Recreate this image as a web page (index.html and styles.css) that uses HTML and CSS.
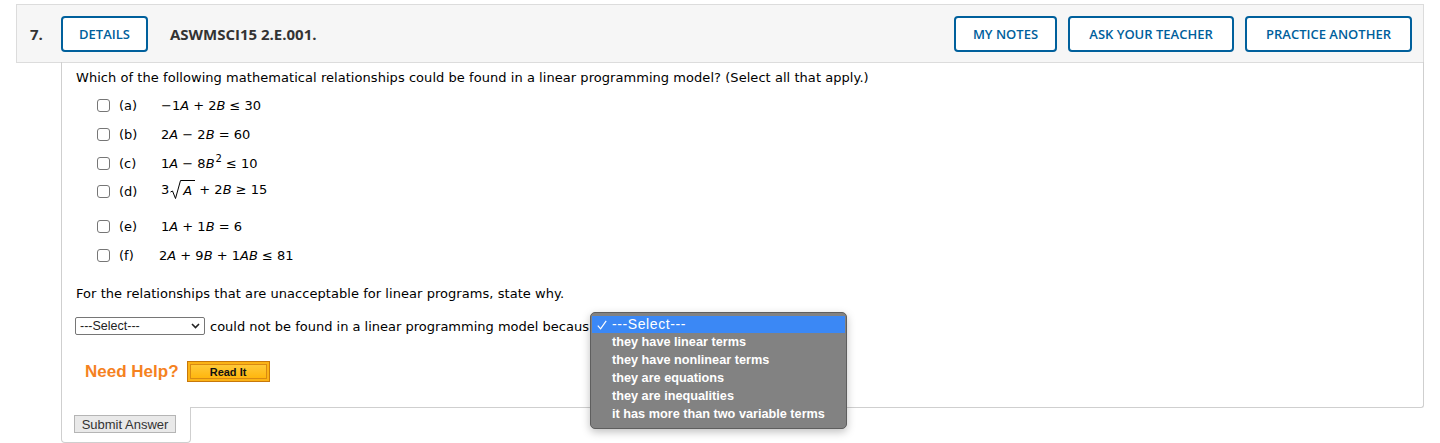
FILE: index.html
```html
<!DOCTYPE html>
<html>
<head>
<meta charset="utf-8">
<link rel="stylesheet" href="styles.css">
</head>
<body>
<div class="question">
  <div class="qhead">
    <span class="qnum">7.</span>
    <button class="hbtn">DETAILS</button>
    <span class="qtitle">ASWMSCI15 2.E.001.</span>
    <div class="hright">
      <button class="hbtn">MY NOTES</button>
      <button class="hbtn">ASK YOUR TEACHER</button>
      <button class="hbtn">PRACTICE ANOTHER</button>
    </div>
  </div>
  <div class="qbody">
    <p class="prompt">Which of the following mathematical relationships could be found in a linear programming model? (Select all that apply.)</p>
    <div class="choices">
      <div class="choice"><span class="cb"></span><span class="lbl">(a)</span><span class="expr">&minus;1<i>A</i> + 2<i>B</i> &le; 30</span></div>
      <div class="choice"><span class="cb"></span><span class="lbl">(b)</span><span class="expr">2<i>A</i> &minus; 2<i>B</i> = 60</span></div>
      <div class="choice"><span class="cb"></span><span class="lbl">(c)</span><span class="expr">1<i>A</i> &minus; 8<i>B</i><span class="sup">2</span> &le; 10</span></div>
      <div class="choice tall"><span class="cb"></span><span class="lbl">(d)</span><span class="expr">3<span class="rad"><svg width="11" height="21" viewBox="0 0 11 21"><path d="M0.5 13 L2.5 12 L5.5 19.5 L10.5 1.5 L11 1.5" fill="none" stroke="#000" stroke-width="1"/></svg><span class="radicand"><i>A</i></span></span> + 2<i>B</i> &ge; 15</span></div>
      <div class="choice"><span class="cb"></span><span class="lbl">(e)</span><span class="expr">1<i>A</i> + 1<i>B</i> = 6</span></div>
      <div class="choice"><span class="cb"></span><span class="lbl">(f)</span><span class="expr f">2<i>A</i> + 9<i>B</i> + 1<i>AB</i> &le; 81</span></div>
    </div>
    <p class="prompt second">For the relationships that are unacceptable for linear programs, state why.</p>
    <div class="selrow">
      <span class="sel">---Select---<svg class="chev" width="9" height="6" viewBox="0 0 9 6"><path d="M1 1 L4.5 4.5 L8 1" fill="none" stroke="#222" stroke-width="1.6"/></svg></span>
      <span class="seltext">could not be found in a linear programming model becaus</span>
      <div class="menu">
        <div class="mi active"><svg class="check" width="10" height="10" viewBox="0 0 10 10"><path d="M0.8 5.6 L3.6 8.8 L9.2 0.8" fill="none" stroke="#fff" stroke-width="1.2"/></svg>---Select---</div>
        <div class="mi">they have linear terms</div>
        <div class="mi">they have nonlinear terms</div>
        <div class="mi">they are equations</div>
        <div class="mi">they are inequalities</div>
        <div class="mi">it has more than two variable terms</div>
      </div>
    </div>
    <div class="help">
      <span class="needhelp">Need Help?</span>
      <span class="readit"><span class="readin">Read It</span></span>
    </div>
  </div>
  <div class="submittab">
    <button class="submit">Submit Answer</button>
  </div>
</div>
</body>
</html>
```
FILE: styles.css
```css
* { box-sizing: border-box; }
body { margin: 0; background: #fff; font-family: "DejaVu Sans", Verdana, sans-serif; color: #000; }
.question { padding: 4px 16px 0 16px; width: 1440px; }
.qhead {
  height: 59px; background: #f6f6f6; border: 1px solid #dcdcdc;
  display: flex; align-items: center; padding: 0 11px 0 13px;
  font-family: "Open Sans", sans-serif;
}
.qnum { font-weight: 700; font-size: 15px; color: #333; width: 31px; }
.hbtn {
  font-family: "Open Sans", sans-serif; font-weight: 600; font-size: 13px;
  color: #00609c; background: #fff; border: 2px solid #00609c; border-radius: 4px;
  height: 36px; padding: 0 16px; letter-spacing: 0;
}
.qtitle { font-weight: 700; font-size: 15px; color: #333; margin-left: 22px; }
.hright { margin-left: auto; display: flex; gap: 11px; }
.hright .hbtn:nth-child(1) { width: 103px; padding: 0; }
.hright .hbtn:nth-child(2) { width: 166px; padding: 0; }
.hright .hbtn:nth-child(3) { width: 167px; padding: 0; }
.qbody {
  margin-left: 45px; width: 1363px; margin-top: -1px;
  border-left: 1px solid #cfcfcf; border-right: 1px solid #cfcfcf; border-bottom: 1px solid #cfcfcf;
  border-bottom-right-radius: 3px;
  padding: 8px 14px 25px 14px; font-size: 13px;
}
.prompt { margin: 0; line-height: 16px; letter-spacing: 0.05px; }
.choices { margin-top: 5px; }
.choice { display: flex; align-items: center; height: 29px; padding-left: 21px; }
.choice.tall { height: 26px; margin-bottom: 8px; }
.cb { width: 13px; height: 13px; border: 1px solid #767676; border-radius: 3px; background: #fff; }
.lbl { margin-left: 9px; width: 42px; }
.expr { white-space: pre; display: inline-flex; align-items: baseline; }
.expr.f { margin-left: -2px; }
.sup { font-size: 10px; position: relative; top: -6px; margin-left: 1px; }
.rad { display: inline-flex; align-items: flex-end; align-self: center; margin-left: 1px; margin-top: -3px; }
.rad svg { display: block; }
.radicand { border-top: 1px solid #000; padding: 2px 3px 0 2px; line-height: 15px; margin-bottom: 2px; }
.prompt.second { margin-top: 16px; }
.selrow { position: relative; display: flex; align-items: center; margin-top: 15px; height: 18px; }
.sel {
  margin-left: -1px; width: 130px; height: 18px; border: 1px solid #767676; border-radius: 2px;
  font-family: "Liberation Sans", Arial, sans-serif; font-size: 12.5px; color: #222;
  display: flex; align-items: center; justify-content: space-between; padding: 0 4px 0 4px; background: #fff;
}
.seltext { margin-left: 5px; }
.menu {
  position: absolute; left: 514px; top: -5px; width: 257px;
  background: #828282; border: 1px solid #5e5e5e; border-radius: 5px;
  padding: 3px 1px 5px 1px; box-shadow: 0 3px 8px rgba(0,0,0,0.25);
  font-family: "Liberation Sans", Arial, sans-serif; font-size: 12.7px; font-weight: 700; color: #fff;
}
.mi { height: 18px; line-height: 18px; padding-left: 20px; position: relative; }
.mi.active { background: #3b88f5; font-weight: 400; font-size: 14px; letter-spacing: 0.6px; height: 17px; line-height: 17px; }
.check { position: absolute; left: 5px; top: 4px; }
.help { display: flex; align-items: center; margin-top: 26px; padding-left: 9px; height: 21px; }
.needhelp { font-family: "Liberation Sans", Arial, sans-serif; font-weight: 700; font-size: 17px; color: #f5821f; }
.readit {
  margin-left: 8px; width: 83px; height: 21px; background: #fbb316; border: 1px solid #c8780a;
  padding: 2px; display: flex;
}
.readin {
  flex: 1; border: 1px solid #d98a12; background: linear-gradient(#ffc938, #ffb60e);
  font-family: "Liberation Sans", Arial, sans-serif; font-weight: 700; font-size: 11px; color: #111;
  display: flex; align-items: center; justify-content: center;
}
.submittab {
  margin-left: 45px; width: 130px; margin-top: -1px; background: #fff; position: relative;
  border-left: 1px solid #cfcfcf; border-right: 1px solid #cfcfcf; border-bottom: 1px solid #cfcfcf;
  border-radius: 0 0 4px 4px; padding: 8px 0 9px 12px;
}
.submit {
  display: block; height: 18px; width: 102px; padding: 0; background: #e9e9e9; border: 1px solid #b5b5b5;
  font-family: "Liberation Sans", Arial, sans-serif; font-size: 13px; color: #333;
}
```
